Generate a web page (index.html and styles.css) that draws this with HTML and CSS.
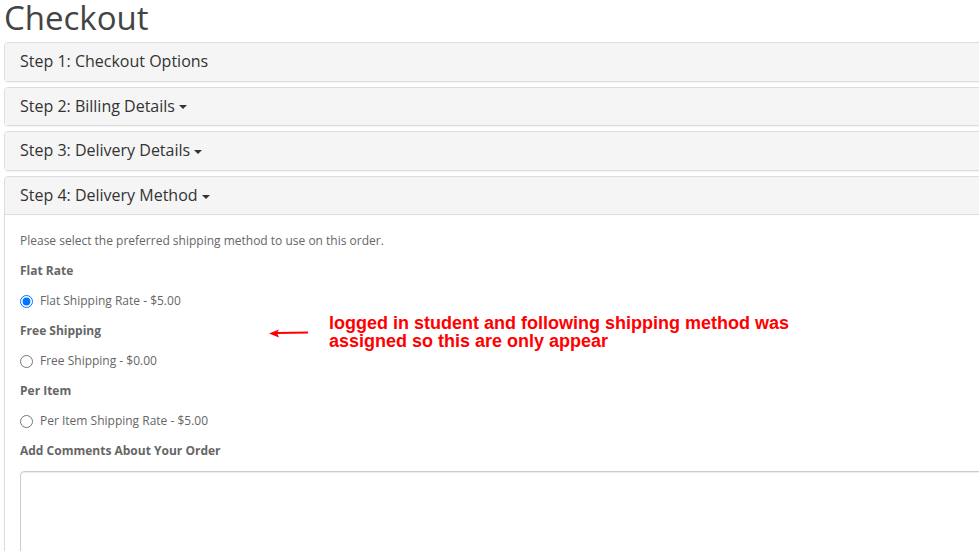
FILE: index.html
```html
<!DOCTYPE html>
<html>
<head>
<meta charset="utf-8">
<link rel="stylesheet" href="styles.css">
</head>
<body>
<div class="content">
  <h1 class="title">Checkout</h1>
  <div class="panel-group">
    <div class="panel">
      <div class="panel-heading"><h4 class="panel-title">Step 1: Checkout Options</h4></div>
    </div>
    <div class="panel">
      <div class="panel-heading"><h4 class="panel-title">Step 2: Billing Details <i class="caret"></i></h4></div>
    </div>
    <div class="panel">
      <div class="panel-heading"><h4 class="panel-title">Step 3: Delivery Details <i class="caret"></i></h4></div>
    </div>
    <div class="panel open">
      <div class="panel-heading"><h4 class="panel-title">Step 4: Delivery Method <i class="caret"></i></h4></div>
      <div class="panel-body">
        <p>Please select the preferred shipping method to use on this order.</p>
        <p><strong>Flat Rate</strong></p>
        <div class="radio"><label><input type="radio" name="ship" checked> Flat Shipping Rate - $5.00</label></div>
        <p><strong>Free Shipping</strong></p>
        <div class="radio"><label><input type="radio" name="ship"> Free Shipping - $0.00</label></div>
        <p><strong>Per Item</strong></p>
        <div class="radio"><label><input type="radio" name="ship"> Per Item Shipping Rate - $5.00</label></div>
        <p><strong>Add Comments About Your Order</strong></p>
        <textarea class="comment" rows="8"></textarea>
      </div>
    </div>
  </div>
  <div class="note">
    <svg class="arrow" width="40" height="10" viewBox="0 0 40 10"><line x1="8" y1="5" x2="39" y2="4.5" stroke="#f00" stroke-width="2"/><polygon points="0,5.5 10,1.5 8,5 10,9.5" fill="#f00"/></svg>
    <div class="note-text">logged in student and following shipping method was<br>assigned so this are only appear</div>
  </div>
</div>
</body>
</html>
```

FILE: styles.css
```css
html, body {
  margin: 0;
  padding: 0;
  overflow: hidden;
  background: #fff;
}
body {
  font-family: "Open Sans", sans-serif;
  font-size: 12px;
  line-height: 20px;
  color: #666;
}
.content {
  position: relative;
  width: 1150px;
  padding-left: 4px;
}
.title {
  margin: -7px 0 0 0;
  font-size: 33px;
  line-height: 49px;
  font-weight: 400;
  color: #444;
}
.panel-group {
  display: flex;
  flex-direction: column;
  gap: 5px;
}
.panel {
  border: 1px solid #ddd;
  border-radius: 4px;
  background: #fff;
  box-shadow: 0 1px 1px rgba(0,0,0,.05);
}
.panel-heading {
  background: #f5f5f5;
  padding: 10px 15px;
  border-radius: 3px 3px 0 0;
  color: #333;
}
.open .panel-heading {
  border-bottom: 1px solid #ddd;
}
.panel-title {
  margin: 0;
  font-size: 16px;
  font-weight: 400;
  line-height: 17.6px;
}
.caret {
  display: inline-block;
  width: 0;
  height: 0;
  margin-left: 0;
  vertical-align: middle;
  border-top: 4px solid #333;
  border-left: 4px solid transparent;
  border-right: 4px solid transparent;
}
.panel-body {
  padding: 16px 15px 15px;
  height: 400px;
}
.panel-body p {
  margin: 0 0 10px;
}
.panel-body strong {
  font-weight: 700;
}
.radio {
  margin: 10px 0;
}
.radio label {
  display: flex;
  align-items: center;
  gap: 7px;
  cursor: pointer;
}
.radio input {
  margin: 0;
  width: 13px;
  height: 13px;
}
.comment {
  display: block;
  width: 1100px;
  height: 120px;
  border: 1px solid #ccc;
  border-radius: 4px;
  box-shadow: inset 0 1px 1px rgba(0,0,0,.075);
  font-family: inherit;
  resize: none;
  box-sizing: border-box;
}
.note {
  position: absolute;
  left: 269px;
  top: 321px;
  display: flex;
  align-items: center;
  gap: 20px;
}
.arrow {
  display: block;
  margin-top: 2px;
}
.note-text {
  font-family: "Liberation Sans", Arial, sans-serif;
  font-weight: 700;
  font-size: 18px;
  line-height: 18px;
  color: #f00;
}
```
